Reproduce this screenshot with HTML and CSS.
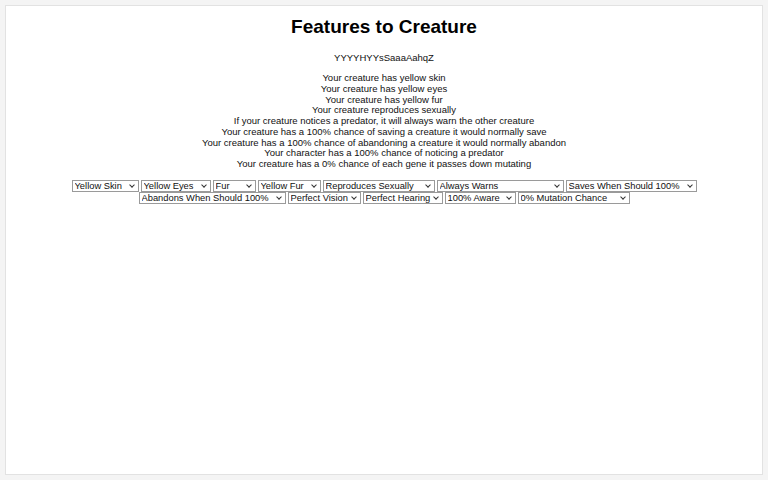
FILE: index.html
```html
<!DOCTYPE html>
<html lang="en">
<head>
    <meta charset="UTF-8">
    <meta name="viewport" content="width=device-width, initial-scale=1.0">
    <title>Features to Creature</title>
    <link rel="stylesheet" href="styles.css">
</head>
<body>
    <div class="container">
        <h1>Features to Creature</h1>

        <!-- Genome code built from the chosen features -->
        <p class="genome">YYYYHYYsSaaaAahqZ</p>

        <p class="traits">
            Your creature has yellow skin<br>
            Your creature has yellow eyes<br>
            Your creature has yellow fur<br>
            Your creature reproduces sexually<br>
            If your creature notices a predator, it will always warn the other creature<br>
            Your creature has a 100% chance of saving a creature it would normally save<br>
            Your creature has a 100% chance of abandoning a creature it would normally abandon<br>
            Your character has a 100% chance of noticing a predator<br>
            Your creature has a 0% chance of each gene it passes down mutating
        </p>

        <div class="features">
            <span class="pick"><select name="skin">
                <option>Yellow Skin</option>
                <option>Green Skin</option>
                <option>Orange Skin</option>
                <option>Blue Skin</option>
            </select></span>
            <span class="pick"><select name="eyes">
                <option>Yellow Eyes</option>
                <option>Green Eyes</option>
                <option>Orange Eyes</option>
                <option>Blue Eyes</option>
            </select></span>
            <span class="pick"><select name="covering">
                <option>Fur</option>
                <option>Scales</option>
                <option>Skin</option>
            </select></span>
            <span class="pick"><select name="fur">
                <option>Yellow Fur</option>
                <option>Brown Fur</option>
                <option>Orange Fur</option>
                <option>White Fur</option>
            </select></span>
            <span class="pick"><select name="reproduction">
                <option>Reproduces Sexually</option>
                <option>Reproduces Asexually</option>
                <option>Reproduces by Cloning</option>
            </select></span>
            <span class="pick"><select name="warning">
                <option>Always Warns</option>
                <option>Never Warns</option>
                <option>Warns When Should 100%</option>
            </select></span>
            <span class="pick"><select name="saving">
                <option>Saves When Should 100%</option>
                <option>Saves When Should 50%</option>
                <option>Saves When Shouldn't 50%</option>
                <option>Never Saves</option>
            </select></span>
            <span class="pick"><select name="abandoning">
                <option>Abandons When Should 100%</option>
                <option>Abandons When Should 50%</option>
                <option>Abandons When Shouldn't 50%</option>
                <option>Never Abandons</option>
            </select></span>
            <span class="pick"><select name="vision">
                <option>Perfect Vision</option>
                <option>Good Vision</option>
                <option>Poor Vision</option>
            </select></span>
            <span class="pick"><select name="hearing">
                <option>Perfect Hearing</option>
                <option>Good Hearing</option>
                <option>Poor Hearing</option>
            </select></span>
            <span class="pick"><select name="awareness">
                <option>100% Aware</option>
                <option>50% Aware</option>
                <option>Barely Aware</option>
            </select></span>
            <span class="pick"><select name="mutation">
                <option>0% Mutation Chance</option>
                <option>50% Mutation Chance</option>
                <option>100% Mutation Chance</option>
            </select></span>
        </div>
    </div>
</body>
</html>
```

FILE: styles.css
```css
/* Page styles for the creature builder */
body {
    margin: 5px;
    background-color: #f4f4f4;
    font-family: "Liberation Sans", Arial, sans-serif;
    font-size: 9.5px;
    line-height: 10.75px;
    color: #111;
}

.container {
    min-height: calc(100vh - 10px);
    box-sizing: border-box;
    background-color: #fff;
    border: 1px solid #e2e2e2;
    box-shadow: 0 1px 2px rgba(0, 0, 0, 0.12);
    text-align: center;
    padding-top: 1px;
}

h1 {
    font-size: 19px;
    line-height: 22px;
    margin: 9px 0 15px;
    color: #000;
}

.genome {
    margin: 0 0 9.33px;
}

.traits {
    margin: 0 0 10px;
}

.features {
    display: flex;
    flex-wrap: wrap;
    justify-content: center;
    gap: 0 2px;
}

/* wrapper so each dropdown can carry its own small arrow */
.pick {
    position: relative;
    display: block;
}

.pick::after {
    content: "";
    position: absolute;
    right: 5px;
    top: 3px;
    width: 3px;
    height: 3px;
    border-right: 1px solid #333;
    border-bottom: 1px solid #333;
    transform: rotate(45deg);
    pointer-events: none;
}

.pick select {
    -webkit-appearance: none;
    appearance: none;
    display: block;
    box-sizing: border-box;
    height: 12px;
    font-family: "Liberation Sans", Arial, sans-serif;
    font-size: 9.33px;
    line-height: 10px;
    color: #111;
    background-color: #fff;
    border: 1px solid #9a9a9a;
    border-radius: 0;
    padding: 0 11px 0 2px;
    margin: 0;
}
```
